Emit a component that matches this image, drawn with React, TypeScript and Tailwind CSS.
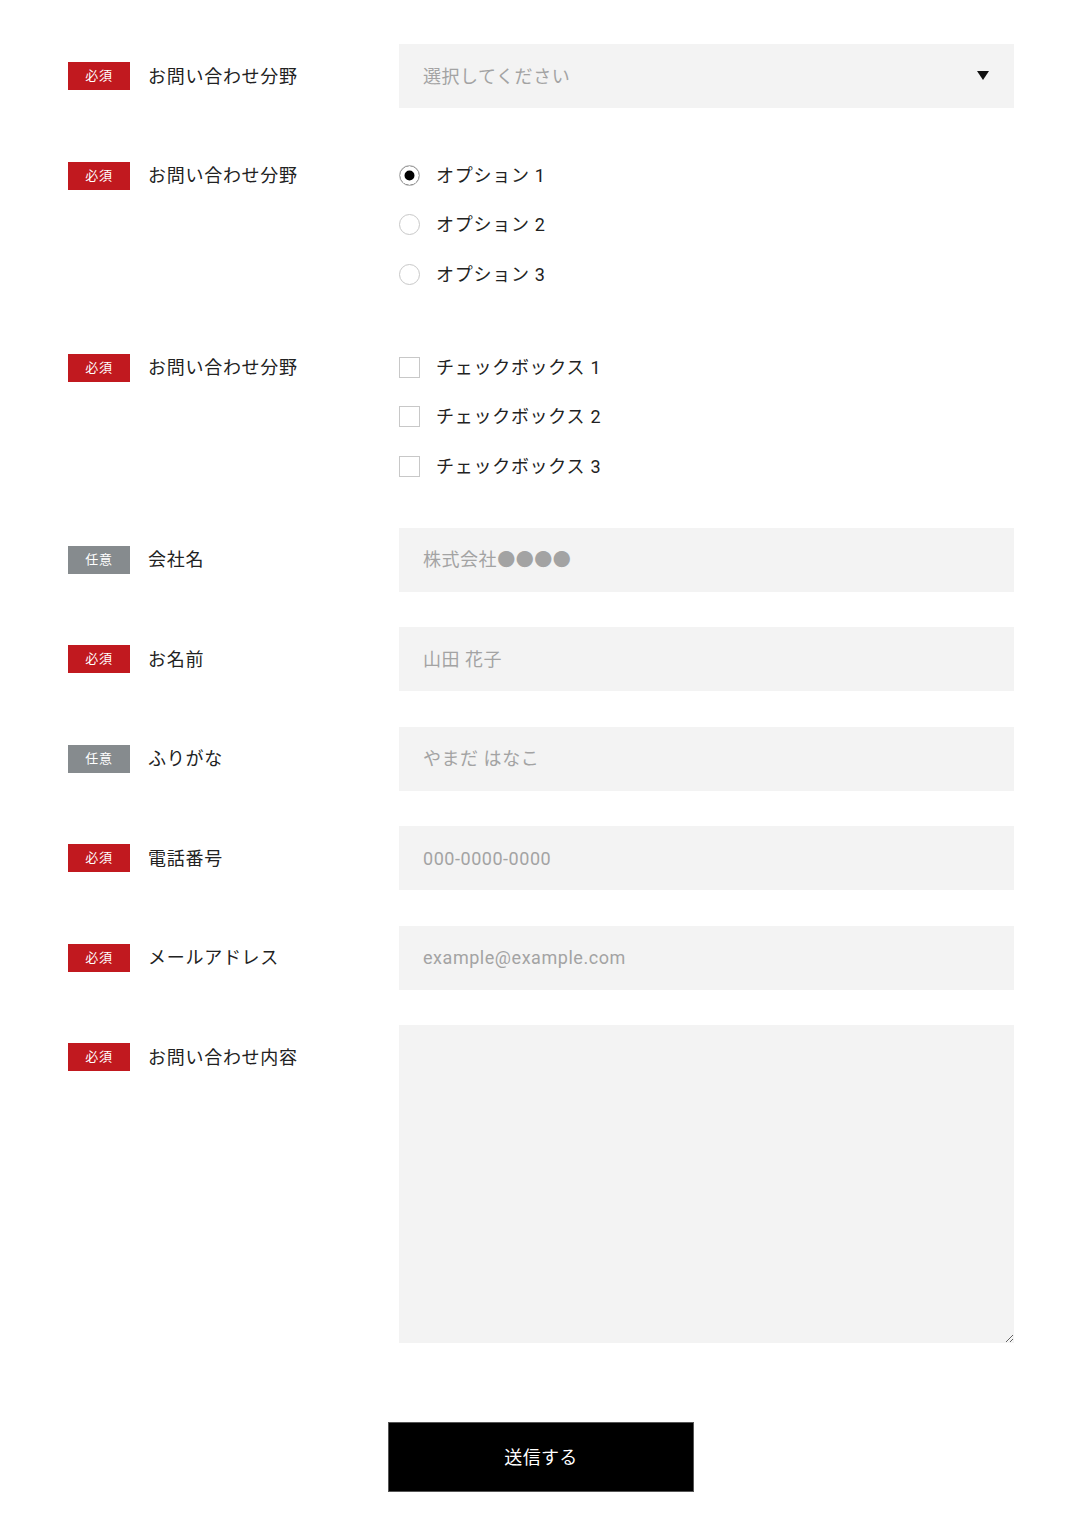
import React from 'react';

type Row = {
  required: boolean;
  label: string;
  field: React.ReactNode;
};

const Badge = ({ required }: { required: boolean }) => (
  <span
    className={`flex h-[28px] w-[62px] shrink-0 items-center justify-center text-[13px] tracking-[0.05em] text-white ${
      required ? 'bg-[#c1191f]' : 'bg-[#868b8e]'
    }`}
  >
    {required ? '必須' : '任意'}
  </span>
);

const inputCls =
  'h-16 w-full bg-[#f3f3f3] px-6 text-[18px] tracking-[0.03em] text-[#222] outline-none placeholder:text-[#a3a3a3]';

const TextInput = ({ placeholder, type = 'text' }: { placeholder: string; type?: string }) => (
  <input type={type} placeholder={placeholder} className={inputCls} />
);

const SelectBox = () => (
  <div className="relative">
    <select defaultValue="" className={`${inputCls} appearance-none text-[#a3a3a3]`}>
      <option value="" disabled>
        選択してください
      </option>
      <option value="1">オプション 1</option>
      <option value="2">オプション 2</option>
    </select>
    <svg
      className="pointer-events-none absolute right-[25px] top-[27px]"
      width="12"
      height="9"
      viewBox="0 0 12 9"
    >
      <path d="M0 0h12L6 9z" fill="#111" />
    </svg>
  </div>
);

const choiceCls = 'flex h-[49.5px] cursor-pointer items-center gap-4 text-[18px] tracking-[0.04em] text-[#222]';

const RadioGroup = () => (
  <div className="flex flex-col pb-[1px] pt-[7px]">
    {[1, 2, 3].map((n) => (
      <label key={n} className={choiceCls}>
        <input
          type="radio"
          name="opt"
          defaultChecked={n === 1}
          className="h-[21px] w-[21px] appearance-none rounded-full border border-[#c8c8c8] bg-white checked:bg-black checked:shadow-[inset_0_0_0_4.5px_white]"
        />
        <span>オプション {n}</span>
      </label>
    ))}
  </div>
);

const CheckGroup = () => (
  <div className="flex flex-col pb-[1px] pt-[7px]">
    {[1, 2, 3].map((n) => (
      <label key={n} className={choiceCls}>
        <input
          type="checkbox"
          className="h-[21px] w-[21px] appearance-none border border-[#c8c8c8] bg-white checked:bg-black"
        />
        <span>チェックボックス {n}</span>
      </label>
    ))}
  </div>
);

export default function App() {
  const rows: Row[] = [
    { required: true, label: 'お問い合わせ分野', field: <SelectBox /> },
    { required: true, label: 'お問い合わせ分野', field: <RadioGroup /> },
    { required: true, label: 'お問い合わせ分野', field: <CheckGroup /> },
    { required: false, label: '会社名', field: <TextInput placeholder="株式会社●●●●" /> },
    { required: true, label: 'お名前', field: <TextInput placeholder="山田 花子" /> },
    { required: false, label: 'ふりがな', field: <TextInput placeholder="やまだ はなこ" /> },
    { required: true, label: '電話番号', field: <TextInput type="tel" placeholder="000-0000-0000" /> },
    { required: true, label: 'メールアドレス', field: <TextInput type="email" placeholder="example@example.com" /> },
    {
      required: true,
      label: 'お問い合わせ内容',
      field: <textarea className="block h-[318px] w-full bg-[#f3f3f3] px-6 py-5 text-[18px] text-[#222] outline-none" />,
    },
  ];

  return (
    <div
      className="min-h-[1536px] bg-white pb-[44px] pl-[68px] pr-[56px] pt-[44px]"
      style={{ fontFamily: 'Roboto, "Noto Sans CJK JP", sans-serif' }}
    >
      <form className="flex flex-col gap-[35.5px]" onSubmit={(e) => e.preventDefault()}>
        {rows.map((row, i) => (
          <div key={i} className="flex">
            <div className="flex h-16 w-[331px] shrink-0 items-center gap-[18px]">
              <Badge required={row.required} />
              <span className="text-[18px] tracking-[0.04em] text-[#222]">{row.label}</span>
            </div>
            <div className="flex-1">{row.field}</div>
          </div>
        ))}
        <div className="flex justify-center pt-[43.5px]">
          <button
            type="submit"
            className="h-[70px] w-[306px] border border-[#555] bg-black text-[18px] tracking-[0.02em] text-white"
          >
            送信する
          </button>
        </div>
      </form>
    </div>
  );
}
